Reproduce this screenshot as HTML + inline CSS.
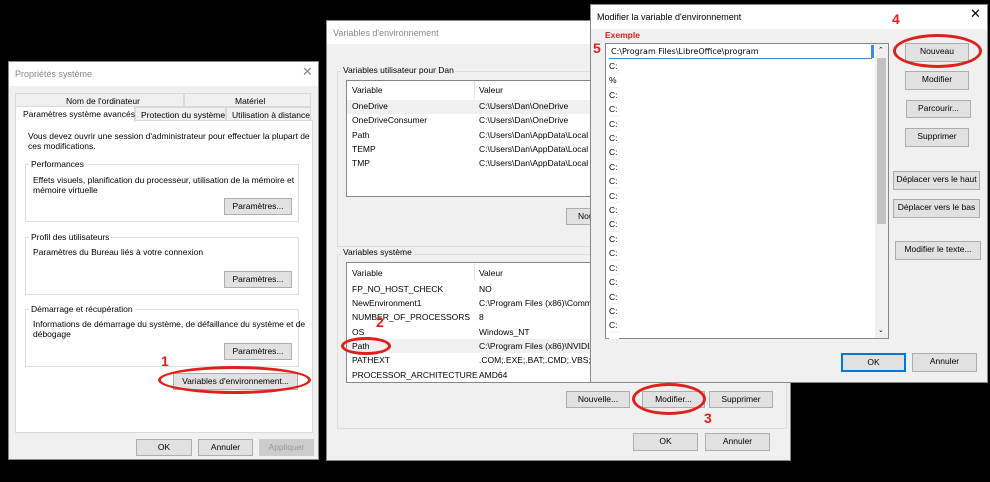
<!DOCTYPE html>
<html><head><meta charset="utf-8"><style>
*{margin:0;padding:0;box-sizing:border-box}
body{width:990px;height:482px;background:#000;position:relative;overflow:hidden;font-family:"Liberation Sans",sans-serif;font-size:8.5px;color:#000}
div,span{position:absolute}
.t{white-space:nowrap;line-height:10px}
.win{background:#f0f0f0;border:1px solid #888;overflow:hidden}
.tb{background:#fff;left:0;right:0;top:0}
.btn{background:#e1e1e1;border:1px solid #adadad;text-align:center;line-height:15px;white-space:nowrap}
.grp{border:1px solid #dcdcdc}
.lbl{background:#f0f0f0;padding:0 2px;white-space:nowrap;line-height:10px}
.wh{background:#fff}
.red{color:#e0201b;font-weight:bold;font-size:14px}
.ell{border:3px solid #e0201b;border-radius:50%}
</style></head><body>

<!-- Window 1 -->
<div class="win" style="left:8px;top:61px;width:311px;height:399px">
 <div class="tb" style="height:24px"><span class="t" style="left:6px;top:7px;color:#888;font-size:9px">Propriétés système</span><span class="t" style="left:293px;top:5px;color:#888;font-size:13px">✕</span></div>
 <div style="left:6px;top:31px;width:169px;height:14px;border:1px solid #d9d9d9;background:#f0f0f0"><span class="t" style="left:50px;top:2px">Nom de l'ordinateur</span></div>
 <div style="left:175px;top:31px;width:127px;height:14px;border:1px solid #d9d9d9;background:#f0f0f0"><span class="t" style="left:50px;top:2px">Matériel</span></div>
 <div style="left:126px;top:45px;width:91px;height:14px;border:1px solid #d9d9d9;background:#f0f0f0"><span class="t" style="left:5px;top:2px">Protection du système</span></div>
 <div style="left:217px;top:45px;width:85px;height:14px;border:1px solid #d9d9d9;background:#f0f0f0"><span class="t" style="left:5px;top:2px">Utilisation à distance</span></div>
 <div class="wh" style="left:6px;top:58px;width:298px;height:313px;border:1px solid #d9d9d9"></div>
 <div class="wh" style="left:6px;top:44px;width:120px;height:16px;border:1px solid #d9d9d9;border-bottom:none"><span class="t" style="left:7px;top:2px">Paramètres système avancés</span></div>
 <span class="t" style="left:19px;top:69px">Vous devez ouvrir une session d'administrateur pour effectuer la plupart de</span>
 <span class="t" style="left:19px;top:79px">ces modifications.</span>
 <div class="grp" style="left:16px;top:102px;width:274px;height:58px"></div>
 <span class="lbl" style="left:20px;top:97px;background:#fff">Performances</span>
 <span class="t" style="left:24px;top:113px">Effets visuels, planification du processeur, utilisation de la mémoire et</span>
 <span class="t" style="left:24px;top:123px">mémoire virtuelle</span>
 <div class="btn" style="left:215px;top:136px;width:68px;height:17px">Paramètres...</div>
 <div class="grp" style="left:16px;top:175px;width:274px;height:58px"></div>
 <span class="lbl" style="left:20px;top:170px;background:#fff">Profil des utilisateurs</span>
 <span class="t" style="left:24px;top:185px">Paramètres du Bureau liés à votre connexion</span>
 <div class="btn" style="left:215px;top:209px;width:68px;height:17px">Paramètres...</div>
 <div class="grp" style="left:16px;top:247px;width:274px;height:58px"></div>
 <span class="lbl" style="left:20px;top:242px;background:#fff">Démarrage et récupération</span>
 <span class="t" style="left:24px;top:257px">Informations de démarrage du système, de défaillance du système et de</span>
 <span class="t" style="left:24px;top:267px">débogage</span>
 <div class="btn" style="left:215px;top:281px;width:68px;height:17px">Paramètres...</div>
 <div class="btn" style="left:164px;top:311px;width:125px;height:17px">Variables d'environnement...</div>
 <div class="btn" style="left:127px;top:377px;width:56px;height:17px">OK</div>
 <div class="btn" style="left:189px;top:377px;width:55px;height:17px">Annuler</div>
 <div class="btn" style="left:250px;top:377px;width:55px;height:17px;color:#999;border-color:#ccc;background:#ccc">Appliquer</div>
</div>
<div class="ell" style="left:158px;top:366px;width:153px;height:28px"></div>
<span class="red t" style="left:161px;top:356px">1</span>

<!-- Window 2 -->
<div class="win" style="left:326px;top:20px;width:465px;height:441px">
 <div class="tb" style="height:23px"><span class="t" style="left:6px;top:7px;color:#888;font-size:9px">Variables d'environnement</span></div>
 <div class="grp" style="left:10px;top:50px;width:450px;height:176px"></div>
 <span class="lbl" style="left:14px;top:44px">Variables utilisateur pour Dan</span>
 <div class="wh" style="left:19px;top:59px;width:450px;height:117px;border:1px solid #828790"></div>
 <span class="t" style="left:25px;top:64px">Variable</span><span class="t" style="left:152px;top:64px">Valeur</span>
 <div style="left:147px;top:60px;width:1px;height:18px;background:#e5e5e5"></div>
 <div style="left:20px;top:79px;width:440px;height:14px;background:#f0f0f0"></div>
 <span class="t" style="left:25px;top:80px">OneDrive</span><span class="t" style="left:152px;top:80px">C:\Users\Dan\OneDrive</span>
 <span class="t" style="left:25px;top:94px">OneDriveConsumer</span><span class="t" style="left:152px;top:94px">C:\Users\Dan\OneDrive</span>
 <span class="t" style="left:25px;top:109px">Path</span><span class="t" style="left:152px;top:109px">C:\Users\Dan\AppData\Local</span>
 <span class="t" style="left:25px;top:123px">TEMP</span><span class="t" style="left:152px;top:123px">C:\Users\Dan\AppData\Local</span>
 <span class="t" style="left:25px;top:137px">TMP</span><span class="t" style="left:152px;top:137px">C:\Users\Dan\AppData\Local</span>
 <div class="btn" style="left:239px;top:187px;width:64px;height:17px;text-align:left;padding-left:11px">Nouvelle...</div>
 <div class="grp" style="left:10px;top:233px;width:450px;height:175px"></div>
 <span class="lbl" style="left:14px;top:226px">Variables système</span>
 <div class="wh" style="left:19px;top:241px;width:450px;height:121px;border:1px solid #828790;overflow:hidden"></div>
 <span class="t" style="left:25px;top:247px">Variable</span><span class="t" style="left:152px;top:247px">Valeur</span>
 <div style="left:147px;top:242px;width:1px;height:18px;background:#e5e5e5"></div>
 <span class="t" style="left:25px;top:263px">FP_NO_HOST_CHECK</span><span class="t" style="left:152px;top:263px">NO</span>
 <span class="t" style="left:25px;top:277px">NewEnvironment1</span><span class="t" style="left:152px;top:277px">C:\Program Files (x86)\Common</span>
 <span class="t" style="left:25px;top:291px">NUMBER_OF_PROCESSORS</span><span class="t" style="left:152px;top:291px">8</span>
 <span class="t" style="left:25px;top:306px">OS</span><span class="t" style="left:152px;top:306px">Windows_NT</span>
 <div style="left:20px;top:318px;width:440px;height:14px;background:#f0f0f0"></div>
 <span class="t" style="left:25px;top:320px">Path</span><span class="t" style="left:152px;top:320px">C:\Program Files (x86)\NVIDIA</span>
 <span class="t" style="left:25px;top:334px">PATHEXT</span><span class="t" style="left:152px;top:334px">.COM;.EXE;.BAT;.CMD;.VBS;.VBE</span>
 <span class="t" style="left:25px;top:349px">PROCESSOR_ARCHITECTURE</span><span class="t" style="left:152px;top:349px">AMD64</span>
 <div class="btn" style="left:239px;top:370px;width:64px;height:17px">Nouvelle...</div>
 <div class="btn" style="left:315px;top:370px;width:63px;height:17px">Modifier...</div>
 <div class="btn" style="left:382px;top:370px;width:64px;height:17px">Supprimer</div>
 <div class="btn" style="left:306px;top:412px;width:65px;height:18px">OK</div>
 <div class="btn" style="left:378px;top:412px;width:65px;height:18px">Annuler</div>
</div>
<div class="ell" style="left:341px;top:337px;width:50px;height:18px"></div>
<span class="red t" style="left:376px;top:317px">2</span>
<div class="ell" style="left:632px;top:383px;width:74px;height:32px"></div>
<span class="red t" style="left:704px;top:413px">3</span>

<!-- Window 3 -->
<div class="win" style="left:590px;top:4px;width:398px;height:379px">
 <div class="tb" style="height:24px"><span class="t" style="left:6px;top:7px;font-size:9px">Modifier la variable d'environnement</span><span class="t" style="left:379px;top:4px;font-size:13px">✕</span></div>
 <span class="t" style="left:14px;top:25px;color:#e0201b;font-weight:bold">Exemple</span>
 <div class="wh" style="left:14px;top:38px;width:284px;height:296px;border:1px solid #828790;overflow:hidden">
  <div style="left:3px;top:1px;width:263px;height:14px;border-bottom:1px solid #3c8ae0;background:#fff"></div>
  <div style="left:265px;top:1px;width:3px;height:13px;background:#3c8ae0"></div>
  <span class="t" style="left:5px;top:3px;font-family:'DejaVu Sans',sans-serif;font-size:8px">C:\Program Files\LibreOffice\program</span>
  <div style="left:269px;top:0;width:13px;height:294px;background:#f0f0f0"></div>
  <div style="left:271px;top:14px;width:9px;height:166px;background:#c2c2c2"></div>
  <span class="t" style="left:272px;top:2px;font-size:7px">⌃</span>
  <span class="t" style="left:272px;top:282px;font-size:7px">⌄</span>
 </div>
 <div style="left:18px;top:54px;width:10px;height:280px;color:#000;line-height:14.4px;font-size:8.5px;background:repeating-linear-gradient(#fff 0 13.4px,#eee 13.4px 14.4px)">C:<br>%<br>C:<br>C:<br>C:<br>C:<br>C:<br>C:<br>C:<br>C:<br>C:<br>C:<br>C:<br>C:<br>C:<br>C:<br>C:<br>C:<br>C:</div>
 <div class="btn" style="left:314px;top:38px;width:64px;height:19px">Nouveau</div>
 <div class="btn" style="left:314px;top:66px;width:64px;height:19px">Modifier</div>
 <div class="btn" style="left:315px;top:95px;width:65px;height:18px">Parcourir...</div>
 <div class="btn" style="left:314px;top:123px;width:64px;height:19px">Supprimer</div>
 <div class="btn" style="left:302px;top:166px;width:87px;height:19px">Déplacer vers le haut</div>
 <div class="btn" style="left:302px;top:194px;width:87px;height:19px">Déplacer vers le bas</div>
 <div class="btn" style="left:304px;top:236px;width:86px;height:19px">Modifier le texte...</div>
 <div class="btn" style="left:250px;top:348px;width:65px;height:19px;border:2px solid #0078d7">OK</div>
 <div class="btn" style="left:321px;top:348px;width:65px;height:19px">Annuler</div>
</div>
<div class="ell" style="left:893px;top:34px;width:89px;height:34px"></div>
<span class="red t" style="left:892px;top:14px">4</span>
<span class="red t" style="left:593px;top:43px">5</span>
</body></html>
